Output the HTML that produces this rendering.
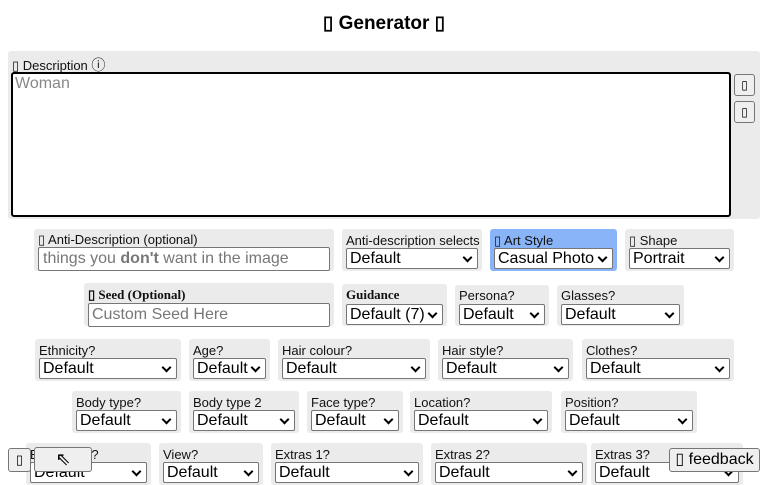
<!DOCTYPE html>
<html><head><meta charset="utf-8"><style>
body{margin:0;width:768px;height:480px;overflow:hidden;background:#fff;font-family:"Liberation Sans",sans-serif;position:relative}
.a{position:absolute}
.b{position:absolute;background:#ebebeb;border-radius:3px}
.l{position:absolute;font-size:13px;color:#111;white-space:nowrap;margin-top:-1px}
.s{position:absolute;height:19px;border:1px solid #767676;border-radius:2px;background:#fff;font-size:16px;line-height:19px;padding-left:3px;box-sizing:content-box;color:#000;white-space:nowrap;overflow:hidden}
.s:after{content:"";position:absolute;right:6px;top:5px;width:5px;height:5px;border-right:2px solid #000;border-bottom:2px solid #000;transform:rotate(45deg)}
.btn{position:absolute;background:#efefef;border:1px solid #767676;border-radius:3px;box-sizing:border-box;font-size:16px;text-align:center}
</style></head><body>
<div class="a" style="left:0;width:768px;top:12px;text-align:center;font-size:19px;font-weight:bold">▯ Generator ▯</div>

<div class="b" style="left:8px;top:51px;width:752px;height:168px"></div>
<div class="l" style="left:12px;top:56px">▯ Description <span style="font-size:14px">ⓘ</span></div>
<div class="a" style="left:11px;top:72px;width:716px;height:141px;border:2px solid #000;border-radius:3px;background:#fff"></div>
<div class="a" style="left:15px;top:75px;font-size:16px;color:#888">Woman</div>
<div class="btn" style="left:734px;top:74px;width:21px;height:22px;font-size:12px;line-height:20px">▯</div>
<div class="btn" style="left:734px;top:101px;width:21px;height:22px;font-size:12px;line-height:20px">▯</div>

<!-- row1 -->
<div class="b" style="left:34px;top:229px;width:300px;height:42px"></div>
<div class="l" style="left:38px;top:233px">▯ Anti-Description (optional)</div>
<div class="a" style="left:38px;top:247px;width:290px;height:22px;border:1px solid #767676;border-radius:2px;background:#fff"></div>
<div class="a" style="left:43px;top:250px;font-size:16px;color:#777">things you <b>don't</b> want in the image</div>
<div class="b" style="left:342px;top:229px;width:140px;height:42px"></div>
<div class="l" style="left:346px;top:234px">Anti-description selects</div>
<div class="s" style="left:346px;top:248px;width:127px">Default</div>
<div class="b" style="left:490px;top:229px;width:127px;height:42px;background:#8ab4f8"></div>
<div class="l" style="left:494px;top:234px">▯ Art Style</div>
<div class="s" style="left:494px;top:248px;width:114px">Casual Photo</div>
<div class="b" style="left:625px;top:229px;width:109px;height:42px"></div>
<div class="l" style="left:629px;top:234px">▯ Shape</div>
<div class="s" style="left:629px;top:248px;width:96px">Portrait</div>

<!-- row2 -->
<div class="b" style="left:84px;top:283px;width:250px;height:43px"></div>
<div class="l" style="left:88px;top:288px;font-family:'Liberation Serif',serif;font-weight:bold">▯ Seed (Optional)</div>
<div class="a" style="left:88px;top:303px;width:240px;height:22px;border:1px solid #767676;border-radius:2px;background:#fff"></div>
<div class="a" style="left:92px;top:306px;font-size:16px;color:#777">Custom Seed Here</div>
<div class="b" style="left:342px;top:284px;width:105px;height:42px"></div>
<div class="l" style="left:346px;top:288px;font-family:'Liberation Serif',serif;font-weight:bold">Guidance</div>
<div class="s" style="left:346px;top:304px;width:92px">Default (7)</div>
<div class="b" style="left:455px;top:285px;width:94px;height:41px"></div>
<div class="l" style="left:459px;top:289px">Persona?</div>
<div class="s" style="left:459px;top:304px;width:81px">Default</div>
<div class="b" style="left:557px;top:285px;width:127px;height:41px"></div>
<div class="l" style="left:561px;top:289px">Glasses?</div>
<div class="s" style="left:561px;top:304px;width:114px">Default</div>

<!-- row3 -->
<div class="b" style="left:35px;top:339px;width:146px;height:42px"></div>
<div class="l" style="left:39px;top:344px">Ethnicity?</div>
<div class="s" style="left:39px;top:358px;width:133px">Default</div>
<div class="b" style="left:189px;top:339px;width:81px;height:42px"></div>
<div class="l" style="left:193px;top:344px">Age?</div>
<div class="s" style="left:193px;top:358px;width:68px">Default</div>
<div class="b" style="left:278px;top:339px;width:152px;height:42px"></div>
<div class="l" style="left:282px;top:344px">Hair colour?</div>
<div class="s" style="left:282px;top:358px;width:139px">Default</div>
<div class="b" style="left:438px;top:339px;width:135px;height:42px"></div>
<div class="l" style="left:442px;top:344px">Hair style?</div>
<div class="s" style="left:442px;top:358px;width:122px">Default</div>
<div class="b" style="left:582px;top:339px;width:152px;height:42px"></div>
<div class="l" style="left:586px;top:344px">Clothes?</div>
<div class="s" style="left:586px;top:358px;width:139px">Default</div>

<!-- row4 -->
<div class="b" style="left:72px;top:391px;width:109px;height:42px"></div>
<div class="l" style="left:76px;top:396px">Body type?</div>
<div class="s" style="left:76px;top:410px;width:96px">Default</div>
<div class="b" style="left:189px;top:391px;width:110px;height:42px"></div>
<div class="l" style="left:193px;top:396px">Body type 2</div>
<div class="s" style="left:193px;top:410px;width:97px">Default</div>
<div class="b" style="left:307px;top:391px;width:96px;height:42px"></div>
<div class="l" style="left:311px;top:396px">Face type?</div>
<div class="s" style="left:311px;top:410px;width:83px">Default</div>
<div class="b" style="left:410px;top:391px;width:142px;height:42px"></div>
<div class="l" style="left:414px;top:396px">Location?</div>
<div class="s" style="left:414px;top:410px;width:129px">Default</div>
<div class="b" style="left:561px;top:391px;width:136px;height:42px"></div>
<div class="l" style="left:565px;top:396px">Position?</div>
<div class="s" style="left:565px;top:410px;width:123px">Default</div>

<!-- row5 -->
<div class="b" style="left:26px;top:443px;width:125px;height:42px"></div>
<div class="l" style="left:30px;top:448px">Body pose?</div>
<div class="s" style="left:30px;top:462px;width:112px">Default</div>
<div class="b" style="left:159px;top:443px;width:104px;height:42px"></div>
<div class="l" style="left:163px;top:448px">View?</div>
<div class="s" style="left:163px;top:462px;width:91px">Default</div>
<div class="b" style="left:271px;top:443px;width:152px;height:42px"></div>
<div class="l" style="left:275px;top:448px">Extras 1?</div>
<div class="s" style="left:275px;top:462px;width:139px">Default</div>
<div class="b" style="left:431px;top:443px;width:156px;height:42px"></div>
<div class="l" style="left:435px;top:448px">Extras 2?</div>
<div class="s" style="left:435px;top:462px;width:143px">Default</div>
<div class="b" style="left:591px;top:443px;width:152px;height:42px"></div>
<div class="l" style="left:595px;top:448px">Extras 3?</div>
<div class="s" style="left:595px;top:462px;width:139px">Default</div>

<div class="btn" style="left:8px;top:448px;width:23px;height:24px;font-size:13px;line-height:22px">▯</div>
<div class="btn" style="left:34px;top:447px;width:58px;height:25px;line-height:23px;font-size:18px">⇖</div>
<div class="btn" style="left:669px;top:448px;width:91px;height:24px;line-height:22px">▯ feedback</div>
</body></html>
